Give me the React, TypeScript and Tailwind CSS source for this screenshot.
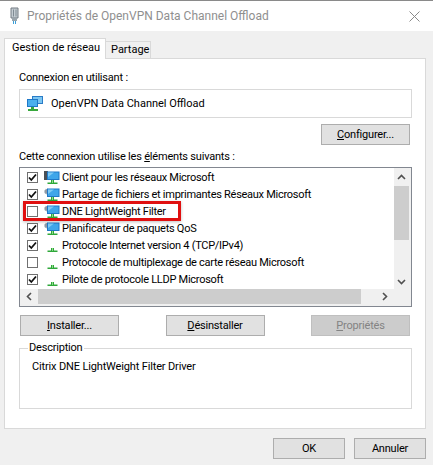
import type { ReactNode } from "react";

const font = "font-['Roboto','Liberation_Sans',sans-serif]";

type IconKind = "server" | "gear" | "none";

const rows: { label: string; checked: boolean; icon: IconKind }[] = [
  { label: "Client pour les réseaux Microsoft", checked: true, icon: "server" },
  { label: "Partage de fichiers et imprimantes Réseaux Microsoft", checked: true, icon: "gear" },
  { label: "DNE LightWeight Filter", checked: false, icon: "gear" },
  { label: "Planificateur de paquets QoS", checked: true, icon: "gear" },
  { label: "Protocole Internet version 4 (TCP/IPv4)", checked: true, icon: "none" },
  { label: "Protocole de multiplexage de carte réseau Microsoft", checked: false, icon: "none" },
  { label: "Pilote de protocole LLDP Microsoft", checked: true, icon: "none" },
];

const NetBase = () => (
  <>
    <path d="M7 10h3v2.500h3.500V14H3.500v-1.500H7z" fill="#2fa83a" />
    <path d="M8 10h1v3H8z" fill="#8fdc8a" />
  </>
);

const RowIcon = ({ kind }: { kind: IconKind }) => (
  <svg width="16" height="16" viewBox="0 0 16 16" className="block shrink-0">
    {kind !== "none" && (
      <>
        {kind === "server" ? (
          <path d="M0 1h4v9H0z" fill="#4a4f55" />
        ) : (
          <circle cx="3" cy="4.500" r="2.600" fill="#8e9aa6" stroke="#c3ccd4" strokeDasharray="1 1" />
        )}
        <path d="M3 1.500h12.500V10H3z" fill="#1f78c8" />
        <path d="M4 2.500h10.500V9H4z" fill="#3fa6ea" />
        <path d="M4 2.500h6L4 7z" fill="#7fcbf5" />
      </>
    )}
    <NetBase />
  </svg>
);

const Check = ({ checked }: { checked: boolean }) => (
  <span className="flex h-[11px] w-[11px] shrink-0 items-center justify-center border border-[#707070] bg-white">
    {checked && (
      <svg width="9" height="9" viewBox="0 0 9 9">
        <path d="M1 4.500 3.300 7 8 1.500" fill="none" stroke="#111" strokeWidth="1.800" />
      </svg>
    )}
  </span>
);

const Btn = ({ children, w, disabled }: { children: ReactNode; w: string; disabled?: boolean }) => (
  <button
    className={`flex h-[21px] items-center justify-center border ${w} ${
      disabled ? "border-[#bfbfbf] bg-[#cccccc] text-[#838383]" : "border-[#adadad] bg-[#e1e1e1] text-black"
    }`}
  >
    {children}
  </button>
);

const Arrow = ({ d }: { d: string }) => (
  <svg width="9" height="9" viewBox="0 0 9 9">
    <path d={d} fill="none" stroke="#505050" strokeWidth="1.600" />
  </svg>
);

export default function App() {
  return (
    <div className={`flex h-[465px] w-[433px] flex-col overflow-hidden bg-[#f0f0f0] text-[11px] leading-[16px] tracking-[-0.2px] text-black ${font}`}>
      {/* title bar */}
      <div className="flex h-[31px] shrink-0 items-center border-t border-t-[#8a8a8a] bg-white pl-[9px] pr-[13px]">
        <svg width="11" height="18" viewBox="0 0 11 18">
          <path d="M2 1h7v10H2z" fill="#c4ccd2" stroke="#727b82" />
          <path d="M4 2.500h1v7H4zM6.500 2.500h1v7h-1z" fill="#7f8a92" />
          <path d="M3 11h5v3H3z" fill="#9aa4ab" />
          <path d="M4 14h1v3H4zM6 14h1v3H6z" fill="#3c9fd8" />
        </svg>
        <span className="ml-[7px] flex-1 text-[12px] tracking-normal text-[#8f8f8f]">Propriétés de OpenVPN Data Channel Offload</span>
        <svg width="11" height="11" viewBox="0 0 11 11">
          <path d="M.5.5l10 10M10.500.5l-10 10" stroke="#8a8a8a" />
        </svg>
      </div>

      {/* tabs */}
      <div className="relative z-10 mt-[7px] flex h-[21px] items-end pl-[4px]">
        <div className="h-[21px] w-[102px] whitespace-nowrap border border-b-0 border-[#d9d9d9] bg-white pl-[7px] pt-[1px] tracking-normal">Gestion de réseau</div>
        <div className="h-[18px] w-[45px] whitespace-nowrap border border-b-0 border-l-0 border-[#d9d9d9] pl-[5px] tracking-normal">Partage</div>
      </div>

      {/* panel */}
      <div className="mx-[4px] -mt-px flex h-[371px] w-[422px] flex-col border border-[#d9d9d9] bg-white pl-[14px] pr-[13px] pt-[11px]">
        <div className="h-[19px]">Connexion en utilisant :</div>
        <div className="flex h-[29px] items-center border border-[#d9d9d9] pl-[7px]">
          <svg width="16" height="16" viewBox="0 0 16 16" className="shrink-0">
            <path d="M5 0h11v8H5z" fill="#2a7cc7" />
            <path d="M6 1h9v6H6z" fill="#7cc6f2" />
            <path d="M0 3h11v8H0z" fill="#1f78c8" />
            <path d="M1 4h9v6H1z" fill="#4bb0ee" />
            <path d="M4 11h3v2h4v2H1v-2h3z" fill="#38a83d" />
          </svg>
          <span className="ml-[8px] tracking-normal">OpenVPN Data Channel Offload</span>
        </div>
        <div className="mt-[6px] flex justify-end pr-[2px]">
          <Btn w="w-[89px]">
            <span>
              <span className="underline">C</span>onfigurer...
            </span>
          </Btn>
        </div>
        <div className="mt-[3px] h-[19px] pt-[1px]">
          Cette connexion utilise les <span className="underline">é</span>léments suivants :
        </div>

        {/* list */}
        <div className="relative flex h-[140px] flex-col border border-[#828790] bg-[#f0f0f0] pb-[2px] pr-[2px] tracking-[-0.27px]">
          <div className="flex min-h-0 flex-1">
            <div className="flex-1 overflow-hidden bg-white pl-[7px] pt-[1px]">
              {rows.map((r) => (
                <div key={r.label} className="flex h-[17px] items-center whitespace-nowrap">
                  <Check checked={r.checked} />
                  <span className="ml-[6px]">
                    <RowIcon kind={r.icon} />
                  </span>
                  <span className="ml-[2px]">{r.label}</span>
                </div>
              ))}
            </div>
            <div className="flex w-[15px] shrink-0 flex-col items-center bg-[#f0f0f0]">
              <div className="flex h-[18px] items-center">
                <Arrow d="M1 6l3.500-3.500L8 6" />
              </div>
              <div className="h-[54px] w-full bg-[#cdcdcd]" />
              <div className="flex-1" />
              <div className="flex h-[15px] items-center">
                <Arrow d="M1 3l3.500 3.500L8 3" />
              </div>
            </div>
          </div>
          <div className="flex h-[15px] shrink-0 items-center bg-[#f0f0f0]">
            <div className="flex w-[18px] justify-center">
              <Arrow d="M6 1 2.500 4.500 6 8" />
            </div>
            <div className="h-full w-[323px] bg-[#cdcdcd]" />
            <div className="pl-[19px]">
              <Arrow d="M3 1l3.500 3.500L3 8" />
            </div>
          </div>

          {/* red annotation */}
          <div className="absolute left-[3px] top-[33px] h-[20px] w-[158px] border-[3px] border-[#e01010] shadow-[0_1px_3px_rgba(0,0,0,0.25)]" />
        </div>

        <div className="mt-[8px] flex justify-between pl-[1px] pr-[2px]">
          <Btn w="w-[99px]">
            <span>
              <span className="underline">I</span>nstaller...
            </span>
          </Btn>
          <Btn w="w-[99px]">
            <span>
              <span className="underline">D</span>ésinstaller
            </span>
          </Btn>
          <Btn w="w-[99px]" disabled>
            <span>
              <span className="underline">P</span>ropriétés
            </span>
          </Btn>
        </div>

        {/* group box */}
        <div className="relative mt-[12px] h-[61px] border border-[#d9d9d9] pl-[12px] pt-[10px]">
          <span className="absolute -top-[9px] left-[8px] bg-white px-[1px]">Description</span>
          <div className="tracking-[-0.15px]">Citrix DNE LightWeight Filter Driver</div>
        </div>
      </div>

      {/* footer */}
      <div className="mt-[9px] flex justify-end gap-[9px] pr-[7px]">
        <Btn w="w-[72px]">OK</Btn>
        <Btn w="w-[72px]">Annuler</Btn>
      </div>
    </div>
  );
}
